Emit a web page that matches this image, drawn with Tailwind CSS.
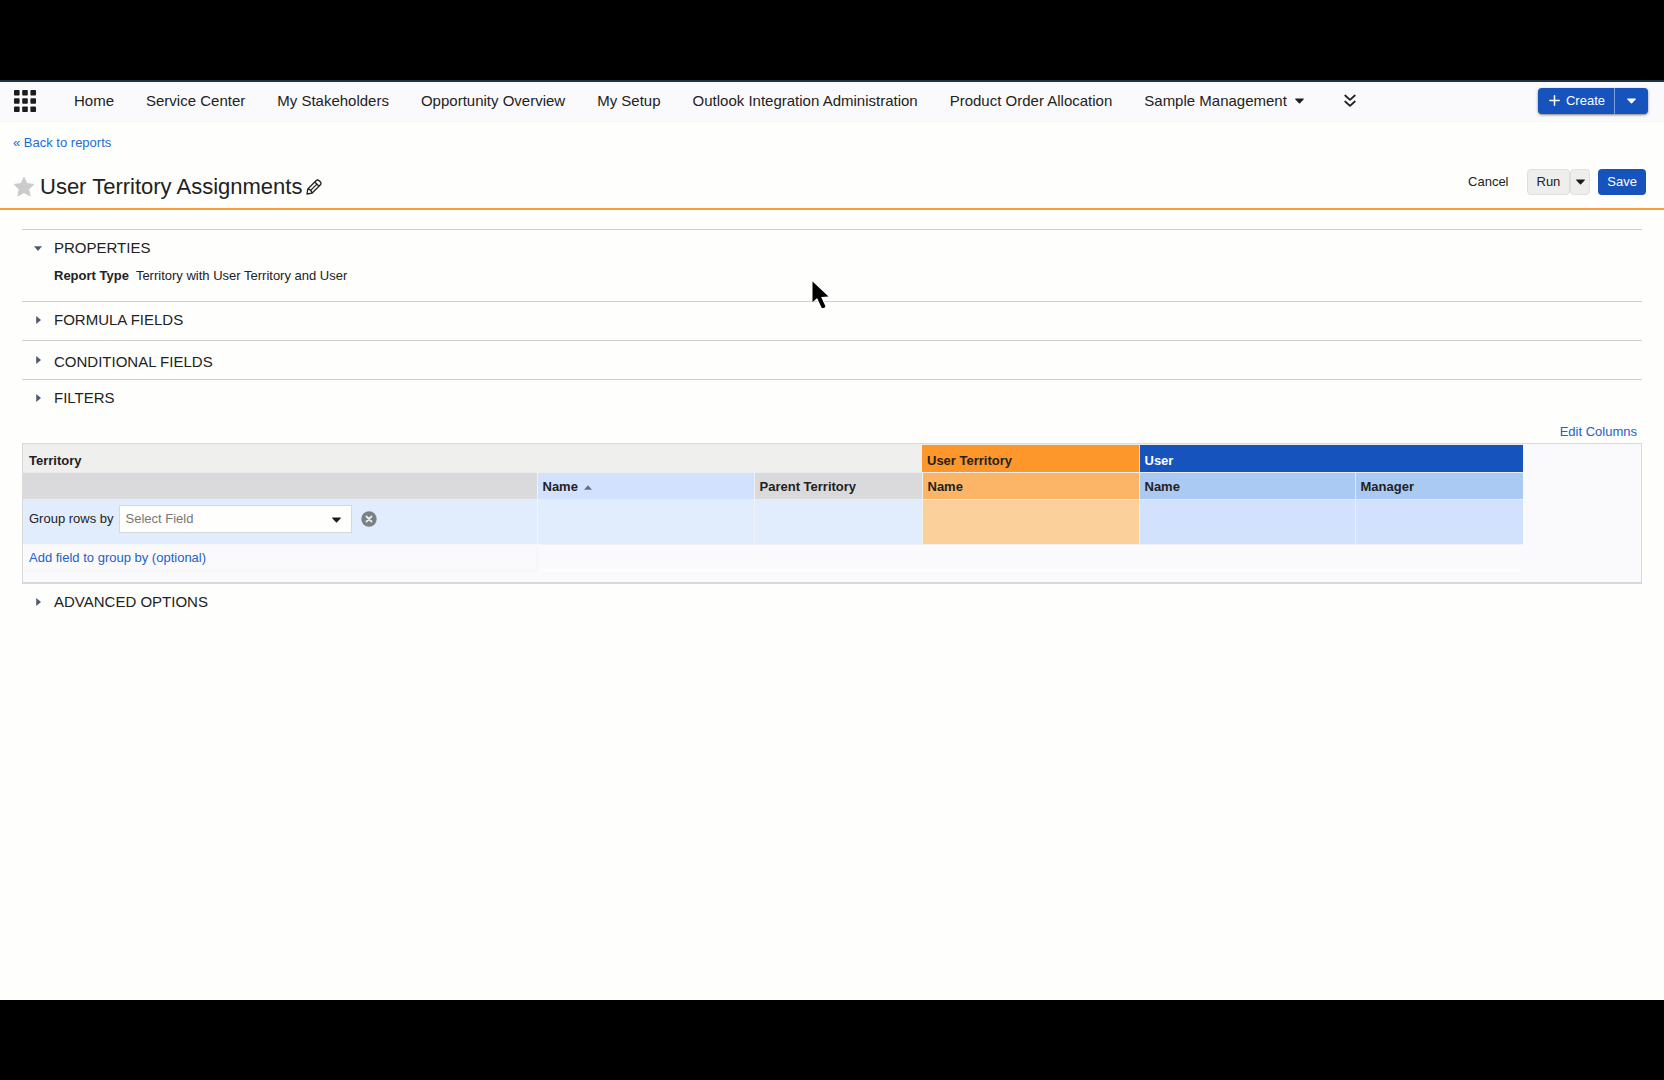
<!DOCTYPE html>
<html lang="en">

<head>
    <meta charset="UTF-8">
    <meta name="viewport" content="width=device-width, initial-scale=1.0">
    <title>User Territory Assignments</title>
    <script src="https://cdn.jsdelivr.net/npm/@tailwindcss/browser@4"></script>
</head>

<body class="bg-black min-h-screen flex flex-col py-20 font-['Liberation_Sans',Arial,sans-serif] text-[13px] leading-5 text-[#222]">
    <div class="relative flex-1 bg-[#fefefd] border-t-2 border-[#1d3147]">
        <!-- Navigation -->
        <header class="flex items-center h-10 pl-3.5 pr-4 pb-0.5 bg-[#fafafd] border-b border-[#f6f6f6]">
            <button aria-label="Apps" class="mr-[38px]">
                <svg class="block" width="22" height="22" viewBox="0 0 22 22" fill="#1c1c1c">
                    <rect x="0" y="0" width="5.600" height="5.600" rx=".8" /><rect x="8.200" y="0" width="5.600" height="5.600" rx=".8" /><rect x="16.400" y="0" width="5.600" height="5.600" rx=".8" />
                    <rect x="0" y="8.200" width="5.600" height="5.600" rx=".8" /><rect x="8.200" y="8.200" width="5.600" height="5.600" rx=".8" /><rect x="16.400" y="8.200" width="5.600" height="5.600" rx=".8" />
                    <rect x="0" y="16.400" width="5.600" height="5.600" rx=".8" /><rect x="8.200" y="16.400" width="5.600" height="5.600" rx=".8" /><rect x="16.400" y="16.400" width="5.600" height="5.600" rx=".8" />
                </svg>
            </button>
            <nav class="flex items-center gap-8 text-[15px] whitespace-nowrap">
                <a href="#">Home</a>
                <a href="#">Service Center</a>
                <a href="#">My Stakeholders</a>
                <a href="#">Opportunity Overview</a>
                <a href="#">My Setup</a>
                <a href="#">Outlook Integration Administration</a>
                <a href="#">Product Order Allocation</a>
                <a href="#" class="flex items-center gap-2">Sample Management
                    <svg width="9" height="6" viewBox="0 0 9 6" fill="#1c1c1c"><path d="M.6.5h7.8c.5 0 .7.5.4.8L5 5.2a.7.7 0 0 1-1 0L.2 1.3C-.1 1 .1.5.6.5z" /></svg>
                </a>
            </nav>
            <button aria-label="More tabs" class="ml-10">
                <svg class="block" width="12" height="14" viewBox="0 0 12 14" fill="none" stroke="#1c1c1c" stroke-width="1.700" stroke-linecap="round" stroke-linejoin="round"><path d="M1.200 1.500 6 5.800l4.800-4.300M1.200 7.500 6 11.800l4.800-4.300" /></svg>
            </button>
            <div class="ml-auto flex h-[26px] rounded-sm bg-[#1653bd] text-white shadow-sm shadow-black/40">
                <button class="flex items-center gap-1.5 pl-[11px] pr-[9px]">
                    <svg width="11" height="11" viewBox="0 0 11 11" stroke="#fff" stroke-width="1.500" stroke-linecap="round"><path d="M5.500.8v9.400M.8 5.500h9.400" /></svg>
                    Create
                </button>
                <button aria-label="More create options" class="flex items-center justify-center w-[34px] border-l border-[#7f9fdb]">
                    <svg width="9" height="6" viewBox="0 0 9 6" fill="#fff"><path d="M.6.5h7.8c.5 0 .7.5.4.8L5 5.2a.7.7 0 0 1-1 0L.2 1.3C-.1 1 .1.5.6.5z" /></svg>
                </button>
            </div>
        </header>

        <!-- Report title -->
        <div class="px-[13px] pt-[11px]">
            <a href="#" class="text-[#1c6cd6]">« Back to reports</a>
        </div>
        <div class="flex items-start justify-between pl-[13px] pr-[18px] pt-4 h-[57px] border-b-2 border-[#f99b41]">
            <div class="flex items-center mt-1 h-7">
                <svg width="22" height="22" viewBox="0 0 22 22" fill="#cbcbcb" stroke="#cbcbcb" stroke-width="1" stroke-linejoin="round"><path d="m11 1.200 2.900 6.400 6.900.8-5.100 4.700 1.400 6.900-6.100-3.500-6.100 3.500 1.400-6.900L1.200 8.400l6.900-.8z" /></svg>
                <h1 class="ml-[5px] text-[22px]">User Territory Assignments</h1>
                <button aria-label="Edit name" class="ml-1">
                    <svg class="block" width="16" height="16" viewBox="0 0 16 16" fill="none" stroke="#222" stroke-width="1.300" stroke-linejoin="round" stroke-linecap="round"><path d="M1 15l.8-5L10 1.800a2.300 2.300 0 0 1 3.200 0l1 1a2.300 2.300 0 0 1 0 3.200L6 14.200zM8.800 3l4.200 4.200M1.800 10c1.800.2 3.800 2 4.200 4.200M5.400 10.600l5-5" /></svg>
                </button>
            </div>
            <div class="flex items-center h-[26px]">
                <button class="mr-[18px]">Cancel</button>
                <button class="h-[26px] px-[9px] rounded-sm bg-[#eeeeed] border border-[#dfdfe2]">Run</button>
                <button aria-label="More run options" class="flex items-center justify-center w-5 h-[26px] mr-2 rounded-sm bg-[#eeeeed] border border-[#dfdfe2]">
                    <svg width="9" height="6" viewBox="0 0 9 6" fill="#1c1c1c"><path d="M.6.5h7.8c.5 0 .7.5.4.8L5 5.2a.7.7 0 0 1-1 0L.2 1.3C-.1 1 .1.5.6.5z" /></svg>
                </button>
                <button class="h-[26px] px-[9px] rounded-sm bg-[#1653bd] text-white">Save</button>
            </div>
        </div>

        <main class="px-[22px] pt-[19px]">
            <!-- Collapsible sections -->
            <section class="h-[72px] pt-2 border-t border-[#cfcfd1]">
                <h2 class="text-[15px]">
                    <button class="flex items-center">
                        <span class="flex justify-center w-8"><svg width="8" height="5" viewBox="0 0 8 5" fill="#4f5b70"><path d="M0 .3h8L4 5z" /></svg></span>PROPERTIES
                    </button>
                </h2>
                <p class="pl-8 pt-2"><b class="mr-[7px]">Report Type</b>Territory with User Territory and User</p>
            </section>
            <section class="h-[39px] pt-2 border-t border-[#cfcfd1]">
                <h2 class="text-[15px]">
                    <button class="flex items-center">
                        <span class="flex justify-center w-8"><svg width="5" height="8" viewBox="0 0 5 8" fill="#4f5b70"><path d="M.2 0v8L5 4z" /></svg></span>FORMULA FIELDS
                    </button>
                </h2>
            </section>
            <section class="h-[39px] pt-[11px] border-t border-[#cfcfd1]">
                <h2 class="text-[15px]">
                    <button class="flex items-center">
                        <span class="flex justify-center w-8 pb-1"><svg width="5" height="8" viewBox="0 0 5 8" fill="#4f5b70"><path d="M.2 0v8L5 4z" /></svg></span>CONDITIONAL FIELDS
                    </button>
                </h2>
            </section>
            <section class="h-[43px] pt-2 border-t border-[#cfcfd1]">
                <h2 class="text-[15px]">
                    <button class="flex items-center">
                        <span class="flex justify-center w-8"><svg width="5" height="8" viewBox="0 0 5 8" fill="#4f5b70"><path d="M.2 0v8L5 4z" /></svg></span>FILTERS
                    </button>
                </h2>
            </section>
            <div class="flex justify-end h-[21px] pr-[5px]">
                <a href="#" class="text-[#2460c9]">Edit Columns</a>
            </div>

            <!-- Report columns -->
            <div class="h-[141px] bg-[#fafafd] border border-b-2 border-[#d9d9db]">
                <table class="table-fixed w-[1500px] border-collapse text-left">
                    <colgroup>
                        <col class="w-[514px]">
                        <col class="w-[217px]">
                        <col class="w-[168px]">
                        <col class="w-[217px]">
                        <col class="w-[216px]">
                        <col class="w-[168px]">
                    </colgroup>
                    <thead>
                        <tr class="h-7 border-t border-[#ececec]">
                            <th colspan="3" class="pl-1.5 pt-1 bg-[#efefee]">Territory</th>
                            <th class="pl-[5px] pt-1 bg-[#fd962b] border-r border-[#fdd9b3]">User Territory</th>
                            <th colspan="2" class="pl-[5px] pt-1 bg-[#1653bd] text-white">User</th>
                        </tr>
                        <tr class="h-[27px] border-y border-[#ececec]">
                            <th class="bg-[#dadadc]"></th>
                            <th class="pl-[5px] pt-0.5 bg-[#d2e1fd] border-x border-[#f0f2f6]">
                                <span class="flex items-center gap-1.5">Name <svg width="8" height="5" viewBox="0 0 8 5" fill="#666f80"><path d="M0 4.700h8L4 .3z" /></svg></span>
                            </th>
                            <th class="pl-[5px] pt-0.5 bg-[#dadadc]">Parent Territory</th>
                            <th class="pl-[5px] pt-0.5 bg-[#fcb566] border-x border-[#f3efe9]">Name</th>
                            <th class="pl-[5px] pt-0.5 bg-[#aac9f3]">Name</th>
                            <th class="pl-[5px] pt-0.5 bg-[#aac9f3] border-l border-[#dfe9f9]">Manager</th>
                        </tr>
                    </thead>
                    <tbody>
                        <tr class="h-[45px] border-b border-[#f0f3f4]">
                            <td class="pl-1.5 pb-1.5 bg-[#e1edfc]">
                                <div class="flex items-center">
                                    <label for="group-by">Group rows by</label>
                                    <div class="relative ml-[5px] w-[233px]">
                                        <select id="group-by" class="block appearance-none w-full h-7 pl-1.5 bg-[#fefefd] border border-[#d5d8dc] text-[#777]">
                                            <option>Select Field</option>
                                        </select>
                                        <svg class="absolute right-[11px] top-3 pointer-events-none" width="9" height="6" viewBox="0 0 9 6" fill="#1c1c1c"><path d="M.6.5h7.8c.5 0 .7.5.4.8L5 5.2a.7.7 0 0 1-1 0L.2 1.3C-.1 1 .1.5.6.5z" /></svg>
                                    </div>
                                    <button aria-label="Remove group" class="ml-[9px]">
                                        <svg class="block" width="16" height="16" viewBox="0 0 16 16"><circle cx="8" cy="8" r="7.700" fill="#7b8083" /><path d="m5.500 5.500 5 5m0-5-5 5" stroke="#e8edf2" stroke-width="1.800" stroke-linecap="round" /></svg>
                                    </button>
                                </div>
                            </td>
                            <td class="bg-[#e1edfc] border-x border-[#f0f3f4]"></td>
                            <td class="bg-[#e1edfc]"></td>
                            <td class="bg-[#fcd09a] border-x border-[#f3efe9]"></td>
                            <td class="bg-[#d2e1fc]"></td>
                            <td class="bg-[#d2e1fc] border-l border-[#e8effb]"></td>
                        </tr>
                        <tr class="h-[26px]">
                            <td class="pl-1.5 border-2 border-l-0 border-[#f7f7f7]"><a href="#" class="text-[#2460c9]">Add field to group by (optional)</a></td>
                            <td colspan="5" class="border-b border-[#fefefe]"></td>
                        </tr>
                    </tbody>
                </table>
            </div>

            <section class="pt-2">
                <h2 class="text-[15px]">
                    <button class="flex items-center">
                        <span class="flex justify-center w-8"><svg width="5" height="8" viewBox="0 0 5 8" fill="#4f5b70"><path d="M.2 0v8L5 4z" /></svg></span>ADVANCED OPTIONS
                    </button>
                </h2>
            </section>
        </main>

        <!-- Mouse pointer -->
        <svg class="absolute left-[811px] top-[198px] pointer-events-none" width="20" height="30" viewBox="0 0 20 30" fill="#000" stroke="#fff" stroke-width="1.500" stroke-linejoin="round" paint-order="stroke"><path d="M1.500 1.500v20.700l4.600-4.200 4.400 9.500c1 1.300 4.200.2 3.800-1.500l-4.200-9.100 7.400-.3z" /></svg>
    </div>
</body>

</html>
